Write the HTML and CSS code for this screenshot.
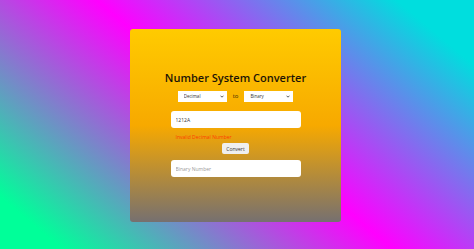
FILE: index.html
```html
<!DOCTYPE html>
<html lang="en">
<head>
<meta charset="utf-8">
<title>Number System Converter</title>
<link rel="stylesheet" href="styles.css">
</head>
<body>
<div class="card">
  <h1 class="title">Number System Converter</h1>
  <div class="form">
    <div class="row">
      <div class="select-wrap">
        <select class="select"><option>Decimal</option></select>
        <svg class="chev" width="4" height="3" viewBox="0 0 4 3"><path d="M0.5 0.7 L2 2.2 L3.5 0.7" fill="none" stroke="#333" stroke-width="0.8"/></svg>
      </div>
      <span class="to">to</span>
      <div class="select-wrap">
        <select class="select"><option>Binary</option></select>
        <svg class="chev" width="4" height="3" viewBox="0 0 4 3"><path d="M0.5 0.7 L2 2.2 L3.5 0.7" fill="none" stroke="#333" stroke-width="0.8"/></svg>
      </div>
    </div>
    <input class="field field-in" type="text" value="1212A">
    <div class="error">Invalid Decimal Number</div>
    <button class="btn">Convert</button>
    <input class="field field-out" type="text" placeholder="Binary Number">
  </div>
</div>
</body>
</html>
```
FILE: styles.css
```css
html, body {
  margin: 0;
  height: 249px;
  overflow: hidden;
}
body {
  font-family: "Open Sans", "DejaVu Sans", sans-serif;
  background: linear-gradient(40deg, #00ff99 8%, #ff00ff 51%, #00dede 90%);
}
.card {
  box-sizing: border-box;
  width: 211px;
  height: 193px;
  margin: 29px 0 0 130px;
  border-radius: 3px;
  background: linear-gradient(to bottom, #ffcb00 0%, #f7a900 50%, #767070 100%);
  display: flex;
  flex-direction: column;
  align-items: center;
  padding-top: 42px;
}
.title {
  margin: 0;
  font-size: 11px;
  line-height: 14px;
  font-weight: 600;
  color: #1d1405;
  white-space: nowrap;
}
.form {
  width: 130px;
  display: flex;
  flex-direction: column;
  align-items: center;
}
.row {
  margin-top: 6px;
  display: flex;
  align-items: center;
  gap: 6px;
}
.select-wrap {
  width: 49px;
  height: 11px;
  background: #fff;
  display: flex;
  align-items: center;
  padding-right: 3px;
  box-sizing: border-box;
}
.select {
  flex: 1;
  min-width: 0;
  appearance: none;
  -webkit-appearance: none;
  border: none;
  outline: none;
  background: transparent;
  font-family: inherit;
  font-size: 4.5px;
  color: #333;
  padding: 0 0 0 6px;
  height: 11px;
  line-height: 11px;
}
.chev {
  display: block;
  flex: none;
}
.to {
  font-size: 6px;
  color: #3a2a05;
  line-height: 11px;
}
.field {
  box-sizing: border-box;
  width: 130px;
  height: 17px;
  border: none;
  outline: none;
  border-radius: 3px;
  background: #fff;
  padding: 0 5px;
  font-family: inherit;
  font-size: 5px;
  color: #333;
}
.field::placeholder {
  color: #9a9a9a;
}
.field-in {
  margin-top: 9px;
}
.error {
  align-self: stretch;
  margin-top: 6px;
  padding-left: 5px;
  font-size: 5px;
  line-height: 6px;
  color: #ff3d00;
}
.btn {
  margin-top: 3px;
  width: 27px;
  height: 11px;
  padding: 0;
  border: none;
  border-radius: 2px;
  background: #efefef;
  font-family: inherit;
  font-size: 5px;
  color: #333;
}
.field-out {
  margin-top: 6px;
}
```
